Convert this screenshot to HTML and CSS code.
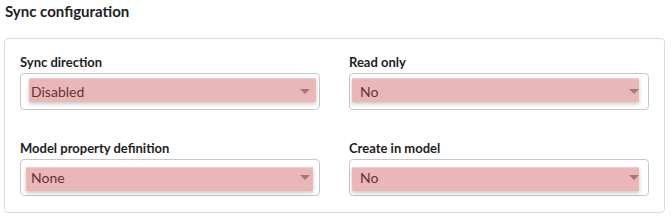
FILE: index.html
```html
<!DOCTYPE html>
<html lang="en">
<head>
    <meta charset="UTF-8">
    <meta name="viewport" content="width=device-width, initial-scale=1.0">
    <title>Sync configuration</title>
    <link rel="stylesheet" href="styles.css">
</head>
<body>

    <!-- Sync configuration -->
    <h3 class="section-title">Sync configuration</h3>

    <div class="panel">
        <div class="field">
            <label>Sync direction</label>
            <div class="select">
                <span class="value">Disabled</span>
                <span class="caret"></span>
                <span class="highlight hl-a"></span>
            </div>
        </div>

        <div class="field">
            <label>Read only</label>
            <div class="select">
                <span class="value">No</span>
                <span class="caret"></span>
                <span class="highlight hl-b"></span>
            </div>
        </div>

        <div class="field">
            <label>Model property definition</label>
            <div class="select">
                <span class="value">None</span>
                <span class="caret"></span>
                <span class="highlight hl-c"></span>
            </div>
        </div>

        <div class="field">
            <label>Create in model</label>
            <div class="select">
                <span class="value">No</span>
                <span class="caret"></span>
                <span class="highlight hl-d"></span>
            </div>
        </div>
    </div>

</body>
</html>
```

FILE: styles.css
```css
body {
    margin: 2px 7px 0 4px;
    font-family: Lato, "Open Sans", sans-serif;
    color: #222;
    background: #fff;
}

.section-title {
    margin: 0 0 18px 0;
    padding-left: 1px;
    font-size: 15px;
    line-height: 18px;
    font-weight: bold;
}

/* Panel */
.panel {
    display: grid;
    grid-template-columns: 1fr 1fr;
    column-gap: 29px;
    row-gap: 30px;
    padding: 15px 15px 16px 15px;
    border: 1px solid #dcdcdc;
    border-radius: 4px;
}

.field label {
    display: block;
    font-size: 13px;
    line-height: 16px;
    font-weight: bold;
    color: #1e1e1e;
    margin-bottom: 3px;
}

/* Select */
.select {
    position: relative;
    display: flex;
    align-items: center;
    height: 35px;
    padding: 0 10px;
    border: 1px solid #c8c8c8;
    border-radius: 4px;
    font-size: 14px;
    color: #333;
}
.select .value {
    flex: 1;
}
.caret {
    width: 0;
    height: 0;
    border-left: 5px solid transparent;
    border-right: 5px solid transparent;
    border-top: 5px solid #9a9a9a;
    margin-right: -1px;
}

/* highlight overlay */
.highlight {
    position: absolute;
    width: 287px;
    height: 24px;
    background: rgba(196, 48, 52, 0.35);
    box-shadow: inset 0 1px 1px rgba(255, 255, 255, 0.35), 0 2px 4px rgba(0, 0, 0, 0.22);
}
.hl-a { left: 8px; top: 4px; }
.hl-b { left: 2px; top: 4px; }
.hl-c { left: 5px; top: 7px; }
.hl-d { left: 2px; top: 7px; }
```
